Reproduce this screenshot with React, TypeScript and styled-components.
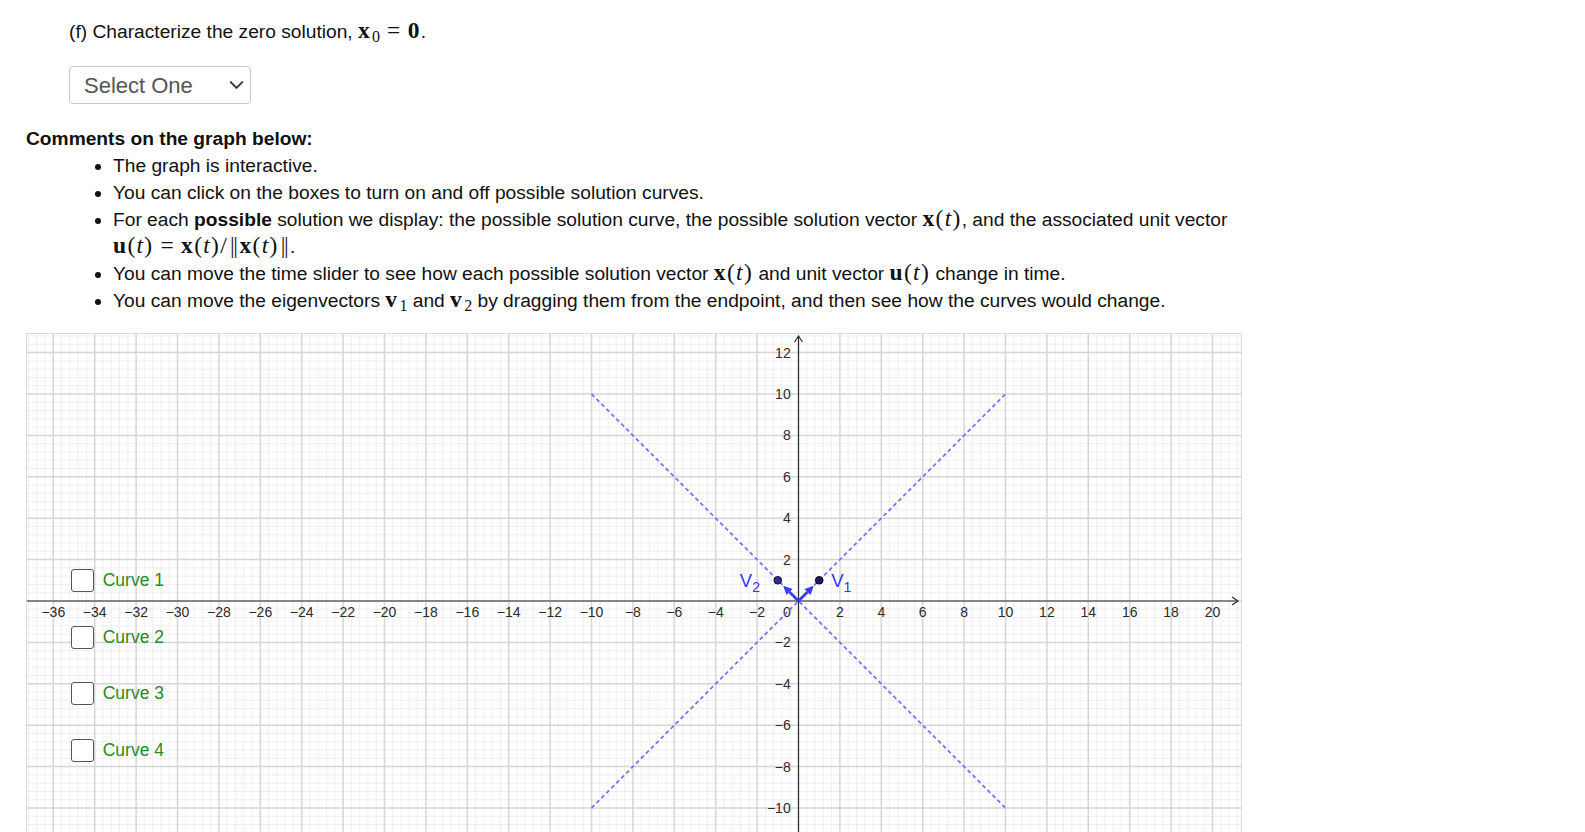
import React from "react";
import styled, { createGlobalStyle } from "styled-components";
import { ChevronDown } from "lucide-react";

const GlobalStyle = createGlobalStyle`
  html, body {
    margin: 0;
    padding: 0;
    background: #fff;
    overflow: hidden;
  }
  body {
    font-family: "Liberation Sans", Arial, sans-serif;
    color: #111;
  }
`;

const Page = styled.div`
  width: 1290px;
  padding: 18px 0 0 26px;
`;

const Question = styled.div`
  padding-left: 43px;
`;

const Prompt = styled.p`
  margin: 0;
  font-size: 19.2px;
  line-height: 27px;
`;

const M = styled.span<{ $bold?: boolean; $italic?: boolean }>`
  font-family: "Liberation Serif", "DejaVu Serif", serif;
  font-size: 23.5px;
  line-height: 1;
  letter-spacing: 1.3px;
  font-weight: ${(p) => (p.$bold ? 700 : 400)};
  font-style: ${(p) => (p.$italic ? "italic" : "normal")};
`;

// double bar of a norm, two thin strokes
const Bars = styled.span`
  font-family: "Liberation Serif", "DejaVu Serif", serif;
  font-size: 23.5px;
  line-height: 1;
  letter-spacing: -1.5px;
  margin: 0 3px 0 2px;
  color: #222;
`;

const Sub = styled.span`
  font-family: "Liberation Serif", "DejaVu Serif", serif;
  font-size: 16px;
  line-height: 1;
  position: relative;
  top: 4px;
  margin-left: 1px;
`;

const Eq = styled(M)`
  margin: 0 6px 0 7px;
`;

const SelectWrap = styled.div`
  position: relative;
  width: 182px;
  height: 38px;
  margin-top: 21px;
`;

const Select = styled.select`
  appearance: none;
  width: 100%;
  height: 100%;
  box-sizing: border-box;
  border: 1px solid #c9c9c9;
  border-radius: 4px;
  background: #fff;
  padding: 0 0 0 14px;
  font-family: "Liberation Sans", Arial, sans-serif;
  font-size: 22px;
  color: #555;
`;

const Chevron = styled(ChevronDown)`
  position: absolute;
  right: 3px;
  top: 50%;
  transform: translateY(-50%);
  pointer-events: none;
  color: #333;
`;

const CommentsTitle = styled.p`
  margin: 21.5px 0 0;
  font-weight: 700;
  font-size: 19.2px;
  line-height: 26px;
`;

const Notes = styled.ul`
  margin: 0;
  padding-left: 87px;
  font-size: 19.2px;
  line-height: 27px;
`;

const GraphPanel = styled.div`
  position: relative;
  margin-top: 19.5px;
  width: 1216px;
  height: 520px;
  border: 1px solid #dadada;
  box-sizing: border-box;
  overflow: hidden;
  background: #fff;
`;

const Canvas = styled.svg`
  display: block;
  font-family: "Liberation Sans", Arial, sans-serif;
`;

const CurveList = styled.div`
  position: absolute;
  left: 43.7px;
  top: 235px;
  display: flex;
  flex-direction: column;
  gap: 33.7px;
`;

const CurveRow = styled.label`
  display: flex;
  align-items: center;
  gap: 9px;
  height: 23px;
  color: #238d23;
  font-size: 17.5px;
  cursor: pointer;
`;

const Box = styled.input`
  appearance: none;
  margin: 0;
  width: 23px;
  height: 23px;
  box-sizing: border-box;
  border: 1.5px solid #555;
  border-radius: 3px;
  background: #fff;
`;

const W = 1214;
const H = 518;
const OX = 771.5;
const OY = 267;
const U = 20.7;
const px = (x: number) => OX + x * U;
const py = (y: number) => OY - y * U;
const fmt = (n: number) => (n < 0 ? `\u2212${-n}` : `${n}`);

function Arrow({ dx, dy }: { dx: number; dy: number }) {
  const x2 = px(dx);
  const y2 = py(dy);
  const len = Math.hypot(x2 - OX, y2 - OY);
  const ux = (x2 - OX) / len;
  const uy = (y2 - OY) / len;
  const bx = x2 - ux * 9;
  const by = y2 - uy * 9;
  const nx = -uy * 4.3;
  const ny = ux * 4.3;
  return (
    <g>
      <line x1={OX} y1={OY} x2={bx} y2={by} stroke="#3b3bf5" strokeWidth={2.8} />
      <polygon
        points={`${x2},${y2} ${bx + nx},${by + ny} ${bx - nx},${by - ny}`}
        fill="#3b3bf5"
      />
    </g>
  );
}

function Graph() {
  const step = 0.4 * U;
  const kMin = Math.ceil(-OX / step);
  const kMax = Math.floor((W - OX) / step);
  const jMin = Math.ceil(-(H - OY) / step);
  const jMax = Math.floor(OY / step);

  const minor: React.ReactNode[] = [];
  const major: React.ReactNode[] = [];
  for (let k = kMin; k <= kMax; k++) {
    const x = OX + k * step;
    const el = <line key={`x${k}`} x1={x} y1={0} x2={x} y2={H} />;
    (k % 5 === 0 ? major : minor).push(el);
  }
  for (let j = jMin; j <= jMax; j++) {
    const y = OY - j * step;
    const el = <line key={`y${j}`} x1={0} y1={y} x2={W} y2={y} />;
    (j % 5 === 0 ? major : minor).push(el);
  }

  const xLabels: number[] = [];
  for (let n = -36; n <= 20; n += 2) if (n !== 0) xLabels.push(n);
  const yLabels: number[] = [];
  for (let n = -10; n <= 12; n += 2) if (n !== 0) yLabels.push(n);

  return (
    <Canvas width={W} height={H} viewBox={`0 0 ${W} ${H}`}>
      <g stroke="#efefef" strokeWidth={1}>{minor}</g>
      <g stroke="#d6d6d6" strokeWidth={1.5}>{major}</g>

      {/* axes */}
      <g stroke="#2b2b2b" strokeWidth={1.2} fill="none">
        <line x1={0} y1={OY} x2={1211} y2={OY} />
        <path d={`M ${1205} ${OY - 4} L 1211 ${OY} L ${1205} ${OY + 4}`} />
        <line x1={OX} y1={H} x2={OX} y2={2} />
        <path d={`M ${OX - 4} 8 L ${OX} 2 L ${OX + 4} 8`} />
      </g>

      <g fill="#2b2b2b" fontSize={14}>
        {xLabels.map((n) => (
          <text key={n} x={px(n)} y={OY + 16} textAnchor="middle">
            {fmt(n)}
          </text>
        ))}
        {yLabels.map((n) => (
          <text key={n} x={OX - 7.8} y={py(n) + 5} textAnchor="end">
            {fmt(n)}
          </text>
        ))}
        <text x={OX - 7.8} y={OY + 16} textAnchor="end">
          0
        </text>
      </g>

      {/* eigen directions */}
      <g stroke="#7474ff" strokeWidth={1.8} strokeDasharray="4 3">
        <line x1={px(-10)} y1={py(10)} x2={px(10)} y2={py(-10)} />
        <line x1={px(-10)} y1={py(-10)} x2={px(10)} y2={py(10)} />
      </g>

      <Arrow dx={0.74} dy={0.74} />
      <Arrow dx={-0.74} dy={0.74} />

      <circle cx={px(1)} cy={py(1)} r={3.8} fill="#1d1d6e" stroke="#000" strokeWidth={1} />
      <circle cx={px(-1)} cy={py(1)} r={3.8} fill="#2e2ea8" stroke="#111" strokeWidth={1} />

      <g fill="#3535ff" fontSize={18.5}>
        <text x={px(1) + 12} y={py(1) + 7}>
          V<tspan fontSize={14} dy={5}>1</tspan>
        </text>
        <text x={px(-1) - 38} y={py(1) + 7}>
          V<tspan fontSize={14} dy={5}>2</tspan>
        </text>
      </g>
    </Canvas>
  );
}

const curves = ["Curve 1", "Curve 2", "Curve 3", "Curve 4"];

export default function App() {
  return (
    <Page>
      <GlobalStyle />
      <Question>
        <Prompt>
          (f) Characterize the zero solution, <M $bold>x</M>
          <Sub>0</Sub>
          <Eq>=</Eq>
          <M $bold>0</M>.
        </Prompt>
        <SelectWrap>
          <Select defaultValue="">
            <option value="">Select One</option>
            <option value="stable">Stable</option>
            <option value="unstable">Unstable</option>
            <option value="saddle">Saddle</option>
          </Select>
          <Chevron size={23} strokeWidth={2} />
        </SelectWrap>
      </Question>

      <CommentsTitle>Comments on the graph below:</CommentsTitle>
      <Notes>
        <li>The graph is interactive.</li>
        <li>You can click on the boxes to turn on and off possible solution curves.</li>
        <li>
          For each <b>possible</b> solution we display: the possible solution curve, the
          possible solution vector <M $bold>x</M>
          <M>(</M>
          <M $italic>t</M>
          <M>)</M>, and the associated unit vector <M $bold>u</M>
          <M>(</M>
          <M $italic>t</M>
          <M>)</M>
          <Eq>=</Eq>
          <M $bold>x</M>
          <M>(</M>
          <M $italic>t</M>
          <M>)/</M>
          <Bars>||</Bars>
          <M $bold>x</M>
          <M>(</M>
          <M $italic>t</M>
          <M>)</M>
          <Bars>||</Bars>.
        </li>
        <li>
          You can move the time slider to see how each possible solution vector{" "}
          <M $bold>x</M>
          <M>(</M>
          <M $italic>t</M>
          <M>)</M> and unit vector <M $bold>u</M>
          <M>(</M>
          <M $italic>t</M>
          <M>)</M> change in time.
        </li>
        <li>
          You can move the eigenvectors <M $bold>v</M>
          <Sub>1</Sub> and <M $bold>v</M>
          <Sub>2</Sub> by dragging them from the endpoint, and then see how the curves
          would change.
        </li>
      </Notes>

      <GraphPanel>
        <Graph />
        <CurveList>
          {curves.map((c) => (
            <CurveRow key={c}>
              <Box type="checkbox" />
              {c}
            </CurveRow>
          ))}
        </CurveList>
      </GraphPanel>
    </Page>
  );
}
